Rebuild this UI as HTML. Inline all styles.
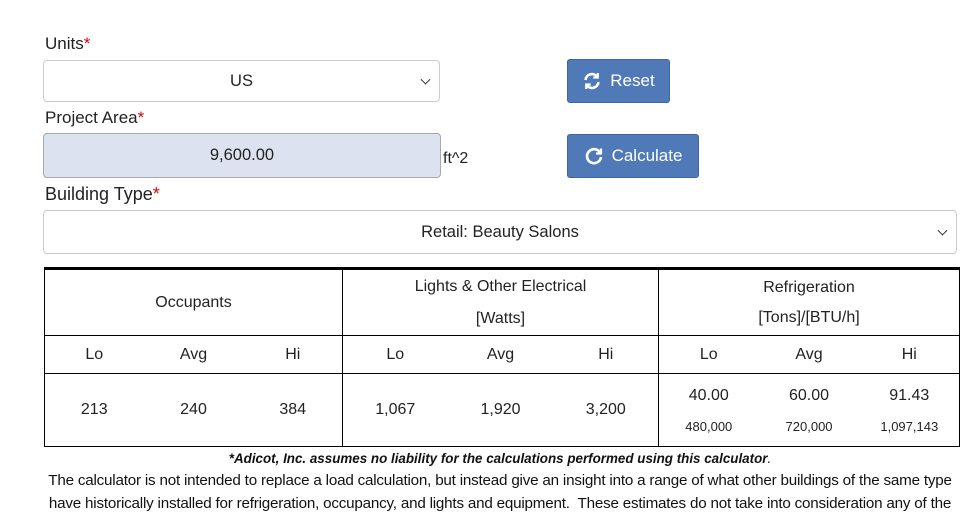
<!DOCTYPE html>
<html><head><meta charset="utf-8"><style>
*{margin:0;padding:0;box-sizing:border-box}
body{width:980px;height:515px;overflow:hidden;background:#fff;font-family:"Liberation Sans",sans-serif;color:#222;position:relative}
.a{position:absolute}
.lbl{font-size:17px;color:#222}
.lbl span{color:#d00}
.box{border:1px solid #ccc;border-radius:4px;background:#fff;font-size:16.5px;text-align:center}
.btn{background:#5079b8;border:1px solid #3f66a3;border-radius:3px;color:#fff;font-size:17px;display:flex;align-items:center;justify-content:center;gap:8px}
.chev{position:absolute;right:10px;top:50%;width:7px;height:7px;border-right:1.5px solid #333;border-bottom:1.5px solid #333;transform:translateY(-70%) rotate(45deg)}
table{position:absolute;left:44px;top:267px;width:915px;border-collapse:collapse;font-size:16px;text-align:center;border-top:3px solid #000;table-layout:fixed}
td{border:1px solid #000;padding:0}
td.n{border-left:none;border-right:none}
.ft{position:absolute;left:0;width:1000px;text-align:center;font-size:15.2px;white-space:nowrap;color:#111;letter-spacing:-0.2px}
</style></head><body>
<div class="a lbl" style="left:45px;top:34px">Units<span>*</span></div>
<div class="a box" style="left:43px;top:60px;width:397px;height:42px;line-height:40px">US<div class="chev"></div></div>
<div class="a btn" style="left:567px;top:59px;width:103px;height:44px">
<svg width="20" height="20" viewBox="0 0 20 20" fill="none" stroke="#fff" stroke-width="2.6"><path d="M3.5 9a6.5 6.5 0 0 1 11.5-3.5"/><path d="M16.5 11a6.5 6.5 0 0 1-11.5 3.5"/><path d="M15.8 2v4.5h-4.5" stroke-width="2.2"/><path d="M4.2 18v-4.5h4.5" stroke-width="2.2"/></svg>Reset</div>
<div class="a lbl" style="left:45px;top:108px">Project Area<span>*</span></div>
<div class="a box" style="left:43px;top:133px;width:398px;height:45px;line-height:43px;background:#dde2f1;border-color:#aaa">9,600.00</div>
<div class="a" style="left:443px;top:150px;font-size:16px">ft^2</div>
<div class="a btn" style="left:567px;top:134px;width:132px;height:44px">
<svg width="20" height="20" viewBox="0 0 20 20" fill="none" stroke="#fff" stroke-width="2.6"><path d="M16 6.5A7 7 0 1 0 17 11"/><path d="M17 2.5v5h-5" stroke-width="2.2"/></svg>Calculate</div>
<div class="a lbl" style="left:45px;top:184px;font-size:18px">Building Type<span>*</span></div>
<div class="a box" style="left:43px;top:210px;width:914px;height:44px;line-height:42px">Retail: Beauty Salons<div class="chev"></div></div>
<table>
<colgroup><col style="width:99px"><col style="width:100px"><col style="width:99px"><col style="width:105px"><col style="width:106px"><col style="width:105px"><col style="width:100px"><col style="width:101px"><col style="width:100px"></colgroup>
<tr style="height:67px"><td colspan="3">Occupants</td><td colspan="3" style="line-height:32px">Lights &amp; Other Electrical<br>[Watts]</td><td colspan="3" style="line-height:30px">Refrigeration<br>[Tons]/[BTU/h]</td></tr>
<tr style="height:38px"><td class="n" style="border-left:1px solid #000">Lo</td><td class="n">Avg</td><td class="n">Hi</td><td class="n" style="border-left:1px solid #000">Lo</td><td class="n">Avg</td><td class="n">Hi</td><td class="n" style="border-left:1px solid #000">Lo</td><td class="n">Avg</td><td class="n" style="border-right:1px solid #000">Hi</td></tr>
<tr style="height:73px"><td class="n" style="border-left:1px solid #000">213</td><td class="n">240</td><td class="n">384</td><td class="n" style="border-left:1px solid #000">1,067</td><td class="n">1,920</td><td class="n">3,200</td>
<td class="n" style="border-left:1px solid #000">40.00<div style="font-size:13px;margin-top:14px">480,000</div></td><td class="n">60.00<div style="font-size:13px;margin-top:14px">720,000</div></td><td class="n" style="border-right:1px solid #000">91.43<div style="font-size:13px;margin-top:14px">1,097,143</div></td></tr>
</table>
<div class="ft" style="top:451px;font-weight:bold;font-style:italic;font-size:13.4px;letter-spacing:0">*Adicot, Inc. assumes no liability for the calculations performed using this calculator<span style="font-weight:normal">.</span></div>
<div class="ft" style="top:472px">The calculator is not intended to replace a load calculation, but instead give an insight into a range of what other buildings of the same type</div>
<div class="ft" style="top:495px">have historically installed for refrigeration, occupancy, and lights and equipment.&nbsp; These estimates do not take into consideration any of the</div>
</body></html>
